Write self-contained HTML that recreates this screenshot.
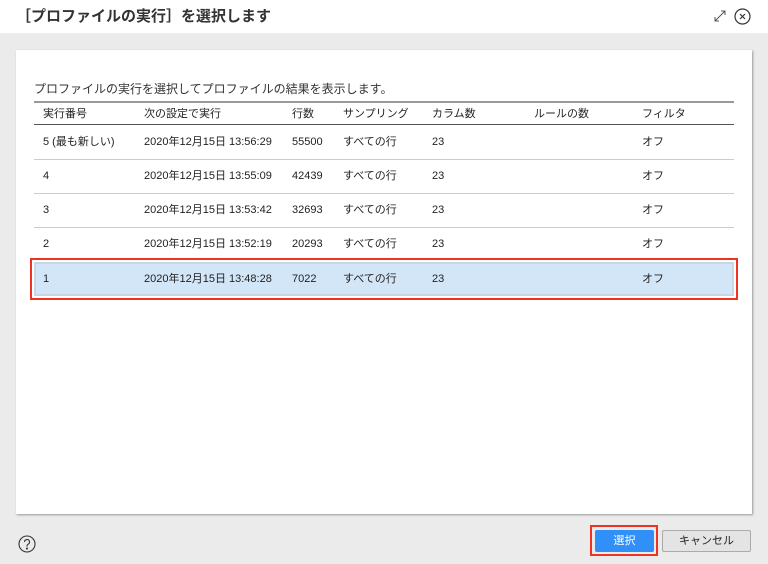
<!DOCTYPE html>
<html><head><meta charset="utf-8"><style>
*{margin:0;padding:0;box-sizing:border-box}
body{width:768px;height:564px;background:#ebebeb;font-family:"Liberation Sans","Noto Sans CJK JP",sans-serif;color:#222;position:relative;overflow:hidden}
.title{position:absolute;left:0;top:0;width:768px;height:33px;background:#fff}
.title span{position:absolute;left:16px;top:8px;font-size:15px;line-height:18px;font-weight:bold;color:#333}
.panel{position:absolute;left:16px;top:50px;width:736px;height:464px;background:#fff;box-shadow:1px 1px 2px #999}
.desc{position:absolute;left:34px;top:81px;font-size:12px;line-height:16px;color:#333}
.t{position:absolute;font-size:11px;line-height:14px;height:14px;color:#222;white-space:nowrap}
.line{position:absolute;left:34px;width:700px;background:#ccc;height:1px}
.sel{position:absolute;left:34px;top:262px;width:700px;height:34px;background:#d3e6f8;border:2px solid #c8d6e4}
.red{position:absolute;border:2px solid #ee3322}
.btn{position:absolute;font-size:11px;text-align:center;border-radius:2px}
</style></head><body>
<div class="title"><span>［プロファイルの実行］を選択します</span>
<svg style="position:absolute;left:713px;top:9px" width="14" height="14" viewBox="0 0 14 14" fill="none" stroke="#555" stroke-width="1"><path d="M2 12L12 2M8 2h4v4M2 8v4h4"/></svg>
<svg style="position:absolute;left:734px;top:8px" width="17" height="17" viewBox="0 0 17 17" fill="none" stroke="#333" stroke-width="1.2"><circle cx="8.5" cy="8.5" r="7.5"/><path d="M6 6l5 5M11 6l-5 5"/></svg>
</div>
<div class="panel"></div>
<div class="desc">プロファイルの実行を選択してプロファイルの結果を表示します。</div>
<div class="line" style="top:101px;height:2px;background:#999"></div>
<div class="line" style="top:124px;background:#555"></div>
<div class="line" style="top:159px"></div>
<div class="line" style="top:193px"></div>
<div class="line" style="top:227px"></div>
<div class="sel"></div>
<div class="red" style="left:30px;top:258px;width:708px;height:42px"></div>
<div class="t" style="left:43px;top:107px">実行番号</div><div class="t" style="left:144px;top:107px">次の設定で実行</div><div class="t" style="left:292px;top:107px">行数</div><div class="t" style="left:343px;top:107px">サンプリング</div><div class="t" style="left:432px;top:107px">カラム数</div><div class="t" style="left:534px;top:107px">ルールの数</div><div class="t" style="left:642px;top:107px">フィルタ</div>

<div class="t" style="left:43px;top:135px">5 (最も新しい)</div><div class="t" style="left:144px;top:135px">2020年12月15日 13:56:29</div><div class="t" style="left:292px;top:135px">55500</div><div class="t" style="left:343px;top:135px">すべての行</div><div class="t" style="left:432px;top:135px">23</div><div class="t" style="left:642px;top:135px">オフ</div>
<div class="t" style="left:43px;top:169px">4</div><div class="t" style="left:144px;top:169px">2020年12月15日 13:55:09</div><div class="t" style="left:292px;top:169px">42439</div><div class="t" style="left:343px;top:169px">すべての行</div><div class="t" style="left:432px;top:169px">23</div><div class="t" style="left:642px;top:169px">オフ</div>
<div class="t" style="left:43px;top:203px">3</div><div class="t" style="left:144px;top:203px">2020年12月15日 13:53:42</div><div class="t" style="left:292px;top:203px">32693</div><div class="t" style="left:343px;top:203px">すべての行</div><div class="t" style="left:432px;top:203px">23</div><div class="t" style="left:642px;top:203px">オフ</div>
<div class="t" style="left:43px;top:237px">2</div><div class="t" style="left:144px;top:237px">2020年12月15日 13:52:19</div><div class="t" style="left:292px;top:237px">20293</div><div class="t" style="left:343px;top:237px">すべての行</div><div class="t" style="left:432px;top:237px">23</div><div class="t" style="left:642px;top:237px">オフ</div>
<div class="t" style="left:43px;top:272px">1</div><div class="t" style="left:144px;top:272px">2020年12月15日 13:48:28</div><div class="t" style="left:292px;top:272px">7022</div><div class="t" style="left:343px;top:272px">すべての行</div><div class="t" style="left:432px;top:272px">23</div><div class="t" style="left:642px;top:272px">オフ</div>

<svg style="position:absolute;left:18px;top:535px" width="18" height="18" viewBox="0 0 18 18" fill="none" stroke="#333" stroke-width="1.1"><circle cx="9" cy="9" r="8"/><path d="M6.5 7a2.5 2.5 0 1 1 3.5 2.3c-.7.4-1 .9-1 1.7v.6"/><circle cx="9" cy="13.6" r=".5" fill="#333"/></svg>
<div class="red" style="left:590px;top:525px;width:68px;height:31px"></div>
<div class="btn" style="left:595px;top:530px;width:59px;height:22px;background:#3090f8;color:#fff;line-height:22px">選択</div>
<div class="btn" style="left:662px;top:530px;width:89px;height:22px;background:#e4e4e4;border:1px solid #aaa;line-height:20px;color:#222">キャンセル</div>
</body></html>
